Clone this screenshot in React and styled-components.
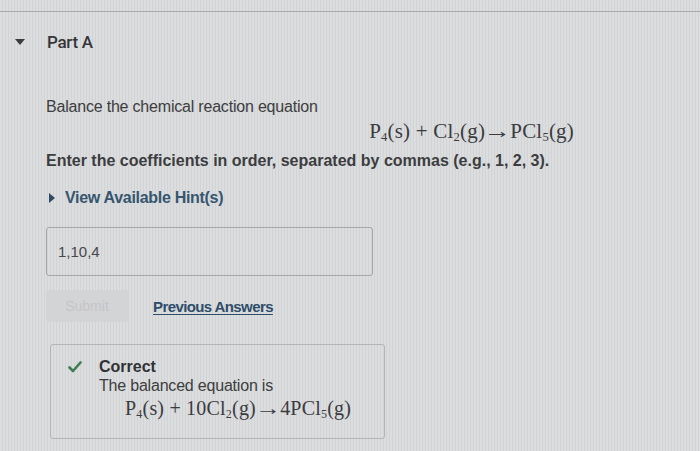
import React from "react";
import styled, { createGlobalStyle } from "styled-components";

const Global = createGlobalStyle`
  html, body { margin: 0; padding: 0; }
  body {
    width: 700px; height: 451px; overflow: hidden;
    background: #d9dadb;
    font-family: "Liberation Sans", Arial, sans-serif;
    color: #3b3c3e;
  }
`;

const Page = styled.div`
  width: 700px;
  height: 451px;
  box-sizing: border-box;
  padding-top: 11px;
  background: repeating-linear-gradient(90deg, #dcddde 0px, #dcddde 2px, #d2d3d5 2px, #d2d3d5 3px);
`;

const TopRule = styled.div`
  height: 1px;
  background: #a9aaac;
  margin-bottom: 19px;
`;

const Header = styled.div`
  display: flex;
  align-items: center;
  gap: 22px;
  padding-left: 15px;
  height: 22px;
`;

const Caret = styled.span`
  width: 0; height: 0;
  border-left: 5px solid transparent;
  border-right: 5px solid transparent;
  border-top: 6px solid #3a3c40;
`;

const Title = styled.h2`
  margin: 0;
  font-family: Roboto, "Liberation Sans", sans-serif;
  font-weight: 500;
  font-size: 17px;
  color: #33353a;
  letter-spacing: -0.3px;
`;

const Body = styled.div`
  padding: 44px 0 0 46px;
  display: flex;
  flex-direction: column;
`;

const Para = styled.p`
  margin: 0;
  font-size: 16px;
  line-height: 20px;
  font-weight: ${p => (p.$bold ? 700 : 400)};
  letter-spacing: ${p => (p.$bold ? "0" : "-0.2px")};
  color: #3c3d40;
`;

const EqRow = styled.div`
  display: flex;
  justify-content: flex-end;
  width: 528px;
  margin: 1px 0 7px;
`;

const Eq = styled.span`
  font-family: "Liberation Serif", "Times New Roman", serif;
  font-size: ${p => p.$size || 21}px;
  color: #3a3b3e;
  line-height: 26px;
  white-space: nowrap;
  letter-spacing: 0.2px;
  sub { font-size: 0.6em; vertical-align: -0.25em; line-height: 0; }
`;

const Arrow = styled.span`
  display: inline-block;
  transform: scaleX(1.3);
  margin: 0 2px;
`;

const Hint = styled.div`
  display: flex;
  align-items: center;
  gap: 10px;
  margin: 18px 0 0 3px;
  font-weight: 700;
  font-size: 16px;
  letter-spacing: -0.3px;
  color: #36566f;
`;

const HintCaret = styled.span`
  width: 0; height: 0;
  border-top: 5px solid transparent;
  border-bottom: 5px solid transparent;
  border-left: 6px solid #2f4a62;
`;

const Input = styled.div`
  margin-top: 20px;
  width: 327px;
  height: 49px;
  box-sizing: border-box;
  border: 1px solid #a4a6a9;
  border-radius: 3px;
  padding: 0 11px;
  display: flex;
  align-items: center;
  font-size: 15px;
  color: #46484c;
`;

const Actions = styled.div`
  display: flex;
  align-items: center;
  gap: 25px;
  margin-top: 14px;
`;

const SubmitBtn = styled.div`
  width: 82px;
  height: 32px;
  background: #d3d4d6;
  border-radius: 2px;
  display: flex;
  align-items: center;
  justify-content: center;
  font-size: 14px;
  color: #c4c5c8;
`;

const Link = styled.span`
  font-size: 15px;
  font-weight: 700;
  color: #2e4d6a;
  text-decoration: underline;
  text-underline-offset: 2px;
  letter-spacing: -0.6px;
`;

const Feedback = styled.div`
  margin: 22px 0 0 4px;
  width: 335px;
  height: 95px;
  box-sizing: border-box;
  border: 1px solid #b2b4b7;
  border-radius: 3px;
  display: flex;
  gap: 17px;
  padding: 12px 0 0 17px;
`;

const FeedText = styled.div`
  display: flex;
  flex-direction: column;
`;

const Strong = styled.div`
  font-size: 16px;
  font-weight: 700;
  color: #303236;
  line-height: 20px;
`;

const Line = styled.div`
  font-size: 16px;
  color: #3c3d40;
  line-height: 18px;
  letter-spacing: -0.2px;
`;

const Indent = styled.div`
  padding-left: 26px;
`;

export default function App() {
  return (
    <>
      <Global />
      <Page>
        <TopRule />
        <Header>
          <Caret />
          <Title>Part A</Title>
        </Header>
        <Body>
          <Para>Balance the chemical reaction equation</Para>
          <EqRow>
            <Eq>P<sub>4</sub>(s) + Cl<sub>2</sub>(g)<Arrow>→</Arrow>PCl<sub>5</sub>(g)</Eq>
          </EqRow>
          <Para $bold>Enter the coefficients in order, separated by commas (e.g., 1, 2, 3).</Para>
          <Hint>
            <HintCaret />
            <span>View Available Hint(s)</span>
          </Hint>
          <Input>1,10,4</Input>
          <Actions>
            <SubmitBtn>Submit</SubmitBtn>
            <Link>Previous Answers</Link>
          </Actions>
          <Feedback>
            <svg width="14" height="12" viewBox="0 0 14 12" style={{ marginTop: 4 }}>
              <path d="M1.5 6.5 L5 10 L12.5 1.5" fill="none" stroke="#3f7d52" strokeWidth="2.6" strokeLinecap="round" strokeLinejoin="round" />
            </svg>
            <FeedText>
              <Strong>Correct</Strong>
              <Line>The balanced equation is</Line>
              <Indent>
                <Eq $size={20}>P<sub>4</sub>(s) + 10Cl<sub>2</sub>(g)<Arrow>→</Arrow>4PCl<sub>5</sub>(g)</Eq>
              </Indent>
            </FeedText>
          </Feedback>
        </Body>
      </Page>
    </>
  );
}
